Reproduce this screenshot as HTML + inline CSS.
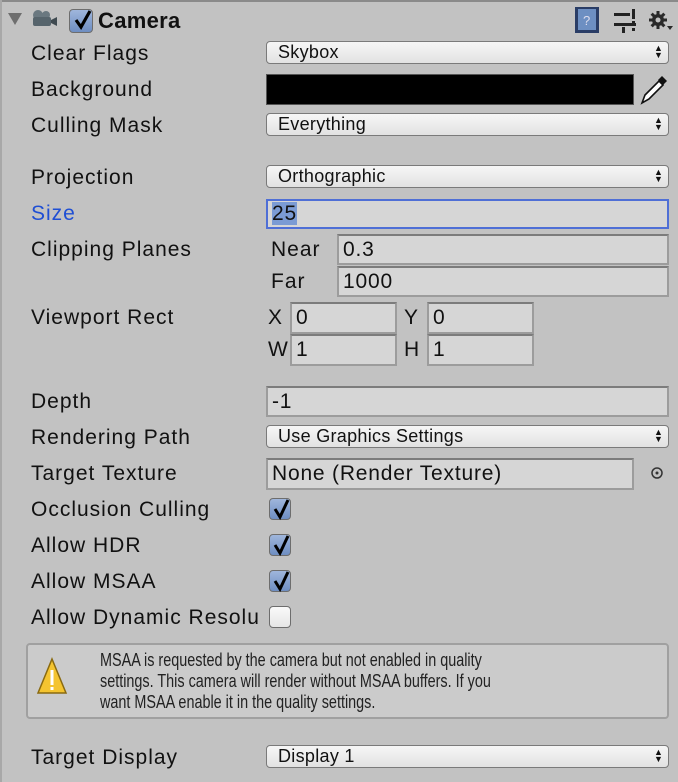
<!DOCTYPE html>
<html><head><style>
html,body{margin:0;padding:0}
body{width:678px;height:782px;background:#c2c2c2;position:relative;overflow:hidden;font-family:"Liberation Sans",sans-serif;color:#111}
.top{position:absolute;left:0;top:0;width:678px;height:2px;background:#8a8a8a}
.lft{position:absolute;left:0;top:0;width:2px;height:782px;background:#a8a8a8}
.l{position:absolute;left:31px;font-size:21px;letter-spacing:1px;line-height:24px;white-space:nowrap;top:0}
.dd{position:absolute;left:266px;width:401px;height:21px;border:1px solid #7a7a7a;border-radius:4px;background:linear-gradient(#f6f6f6,#e2e2e2);font-size:18px;letter-spacing:0.3px;line-height:21px;box-sizing:content-box}
.dd span{position:absolute;left:11px}
.dd i{position:absolute;right:8px;top:3px;font-style:normal;font-size:9px;line-height:7px;width:6px}
.f{position:absolute;background:#d6d6d6;border:2px solid #9c9c9c;border-top-color:#7c7c7c;box-sizing:border-box;font-size:21px;letter-spacing:0.8px;line-height:27px;padding-left:4px}
.cb{position:absolute;left:269px;width:22px;height:22px;border:1px solid #6d6d6d;border-radius:4px;background:linear-gradient(#9fb6dc,#6e8ec2);box-sizing:border-box}
.cb svg{position:absolute;left:2px;top:-2px}
.cbe{background:linear-gradient(#fafafa,#e6e6e6)}
</style></head><body>
<div class="top"></div><div class="lft"></div>
<svg style="position:absolute;left:8px;top:13px" width="14" height="13"><path d="M0 0H14L7 12Z" fill="#6e6e6e"/></svg>
<svg style="position:absolute;left:30px;top:9px" width="28" height="20"><circle cx="8" cy="6" r="5" fill="#6a7880"/><circle cx="16" cy="6" r="4" fill="#6a7880"/><rect x="3" y="8" width="18" height="9" rx="2" fill="#56646c"/><path d="M21 11L27 8V17L21 14Z" fill="#3f4a50"/></svg>
<div class="cb" style="left:69px;top:9px;width:24px;height:24px"><svg width="22" height="24"><path d="M4 12L9 19L18 3" stroke="#000" stroke-width="3.2" fill="none"/></svg></div>
<div style="position:absolute;left:98px;top:8px;font-size:22px;font-weight:bold;line-height:26px;letter-spacing:0.3px">Camera</div>
<svg style="position:absolute;left:574px;top:6px" width="26" height="28"><rect x="1" y="1" width="24" height="26" fill="#2a3d66"/><rect x="4" y="3" width="18" height="21" fill="#6d8fc2"/><text x="9" y="19" font-size="13" fill="#dde" font-family="Liberation Sans">?</text></svg>
<svg style="position:absolute;left:614px;top:9px" width="24" height="24"><rect x="0" y="4" width="16" height="3" fill="#222"/><rect x="0" y="14" width="22" height="3" fill="#222"/><rect x="18" y="0" width="3" height="10" fill="#222"/><rect x="18" y="12" width="3" height="3" fill="#222"/><rect x="8" y="18" width="3" height="6" fill="#222"/><rect x="18" y="19" width="3" height="3" fill="#222"/></svg>
<svg style="position:absolute;left:648px;top:10px" width="26" height="26"><g fill="#2a2a2a"><circle cx="10" cy="10" r="6"/><rect x="8.5" y="1" width="3" height="18"/><rect x="1" y="8.5" width="18" height="3"/><rect x="8.5" y="1" width="3" height="18" transform="rotate(45 10 10)"/><rect x="8.5" y="1" width="3" height="18" transform="rotate(-45 10 10)"/></g><circle cx="10" cy="10" r="2.5" fill="#c2c2c2"/><path d="M19 16H25L22 20Z" fill="#2a2a2a"/></svg>

<div class="l" style="top:42px">Clear Flags</div>
<div class="dd" style="top:41px"><span>Skybox</span><i>▲<br>▼</i></div>
<div class="l" style="top:78px">Background</div>
<div style="position:absolute;left:266px;top:74px;width:368px;height:31px;background:#000;border:1px solid #555;box-sizing:border-box"></div>
<svg style="position:absolute;left:639px;top:74px" width="30" height="32"><path d="M3 29L6 21L20 7L24 11L10 25Z" fill="#fff" stroke="#111" stroke-width="1.6"/><path d="M19 6L23 2L28 7L24 11Z" fill="#111"/></svg>
<div class="l" style="top:114px">Culling Mask</div>
<div class="dd" style="top:113px"><span>Everything</span><i>▲<br>▼</i></div>

<div class="l" style="top:166px">Projection</div>
<div class="dd" style="top:165px"><span>Orthographic</span><i>▲<br>▼</i></div>
<div class="l" style="top:202px;color:#1f4fd4">Size</div>
<div class="f" style="left:266px;top:199px;width:403px;height:30px;border:2px solid #4f6fd6;line-height:26px"><span style="background:#7b9bd4">25</span></div>
<div class="l" style="top:238px">Clipping Planes</div>
<div class="l" style="left:271px;top:238px">Near</div>
<div class="f" style="left:337px;top:234px;width:332px;height:31px">0.3</div>
<div class="l" style="left:271px;top:270px">Far</div>
<div class="f" style="left:337px;top:266px;width:332px;height:31px">1000</div>
<div class="l" style="top:306px">Viewport Rect</div>
<div class="l" style="left:268px;top:306px">X</div>
<div class="f" style="left:290px;top:302px;width:107px;height:32px">0</div>
<div class="l" style="left:404px;top:306px">Y</div>
<div class="f" style="left:427px;top:302px;width:107px;height:32px">0</div>
<div class="l" style="left:268px;top:338px">W</div>
<div class="f" style="left:290px;top:334px;width:107px;height:32px">1</div>
<div class="l" style="left:404px;top:338px">H</div>
<div class="f" style="left:427px;top:334px;width:107px;height:32px">1</div>

<div class="l" style="top:390px">Depth</div>
<div class="f" style="left:266px;top:386px;width:403px;height:31px">-1</div>
<div class="l" style="top:426px">Rendering Path</div>
<div class="dd" style="top:425px"><span>Use Graphics Settings</span><i>▲<br>▼</i></div>
<div class="l" style="top:462px">Target Texture</div>
<div class="f" style="left:266px;top:458px;width:368px;height:32px">None (Render Texture)</div>
<svg style="position:absolute;left:650px;top:466px" width="14" height="14"><circle cx="7" cy="7" r="5" fill="none" stroke="#333" stroke-width="1.5"/><circle cx="7" cy="7" r="1.5" fill="#333"/></svg>
<div class="l" style="top:498px">Occlusion Culling</div>
<div class="cb" style="top:498px"><svg width="20" height="24"><path d="M3 12L8 20L16 3" stroke="#000" stroke-width="3" fill="none"/></svg></div>
<div class="l" style="top:534px">Allow HDR</div>
<div class="cb" style="top:534px"><svg width="20" height="24"><path d="M3 12L8 20L16 3" stroke="#000" stroke-width="3" fill="none"/></svg></div>
<div class="l" style="top:570px">Allow MSAA</div>
<div class="cb" style="top:570px"><svg width="20" height="24"><path d="M3 12L8 20L16 3" stroke="#000" stroke-width="3" fill="none"/></svg></div>
<div class="l" style="top:606px">Allow Dynamic Resolu</div>
<div class="cb cbe" style="top:606px"></div>

<div style="position:absolute;left:26px;top:643px;width:643px;height:76px;border:2px solid #a0a0a0;border-radius:4px;background:#cbcbcb;box-sizing:border-box"></div>
<svg style="position:absolute;left:36px;top:656px" width="32" height="42"><path d="M16 3L30 37H2Z" fill="#f4c430" stroke="#8a6a10" stroke-width="1.5"/><rect x="14.5" y="14" width="3" height="15" fill="#fff"/><rect x="14.5" y="31" width="3" height="3" fill="#fff"/></svg>
<div style="position:absolute;left:100px;top:650px;font-size:18px;line-height:21px;color:#222;white-space:nowrap;transform:scaleX(0.8);transform-origin:0 0">MSAA is requested by the camera but not enabled in quality<br>settings. This camera will render without MSAA buffers. If you<br>want MSAA enable it in the quality settings.</div>

<div class="l" style="top:746px">Target Display</div>
<div class="dd" style="top:745px"><span>Display 1</span><i>▲<br>▼</i></div>
</body></html>
